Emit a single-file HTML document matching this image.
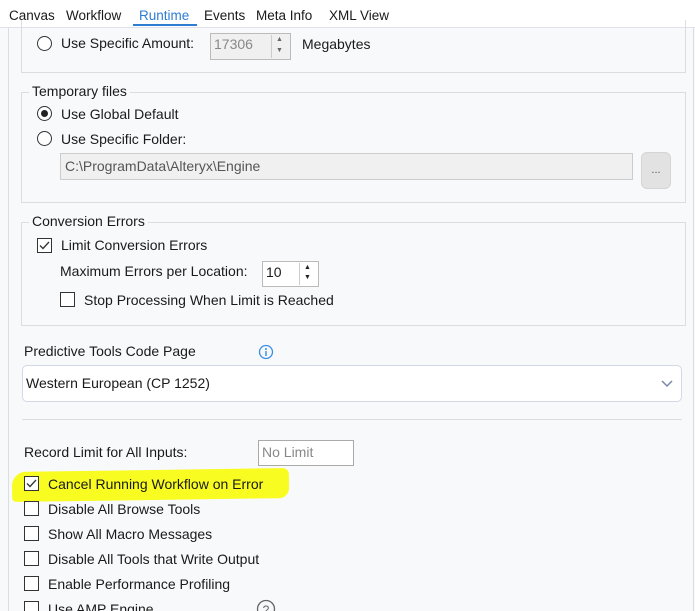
<!DOCTYPE html>
<html><head><meta charset="utf-8"><style>
*{box-sizing:border-box;margin:0;padding:0}
html,body{width:695px;height:611px;overflow:hidden}
body{background:#f8f9fb;font-family:"Liberation Sans",sans-serif;font-size:14px;color:#1a1a1a;position:relative}
.a{position:absolute;white-space:nowrap}
.tabs{position:absolute;left:0;top:0;width:695px;height:28px;background:#fff;border-bottom:1px solid #dfe2e8}
.grp{position:absolute;border:1px solid #dcdde0}
.leg{position:absolute;background:#f8f9fb;padding:0 3px}
.radio{position:absolute;width:15px;height:15px;border:1px solid #333;border-radius:50%;background:#fff}
.radio.on::after{content:"";position:absolute;left:3px;top:3px;width:7px;height:7px;border-radius:50%;background:#222}
.cb{position:absolute;width:15px;height:15px;border:1px solid #333;background:#fff}
.spin{position:absolute;border:1px solid #bbb;background:#fff}
.t{font-size:13.5px}
</style></head><body>
<div class="tabs"></div>
<div class="a t" style="left:9px;top:8px">Canvas</div>
<div class="a t" style="left:66px;top:8px">Workflow</div>
<div class="a t" style="left:139px;top:8px;color:#2d7dd2">Runtime</div>
<div style="position:absolute;left:133px;top:24px;width:64px;height:2px;background:#2d7dd2"></div>
<div class="a t" style="left:204px;top:8px">Events</div>
<div class="a t" style="left:256px;top:8px">Meta Info</div>
<div class="a t" style="left:329px;top:8px">XML View</div>
<div style="position:absolute;left:8px;top:28px;width:1px;height:583px;background:#dcdde0"></div>
<div style="position:absolute;left:693px;top:28px;width:1px;height:583px;background:#dcdde0"></div>

<div class="grp" style="left:21px;top:20px;width:665px;height:53px;border-top:none"></div>
<div class="radio" style="left:37px;top:36px"></div>
<div class="a" style="left:61px;top:35px">Use Specific Amount:</div>
<div class="spin" style="left:210px;top:33px;width:81px;height:27px;background:#f0f0f0"></div>
<div class="a" style="left:214px;top:36px;color:#888">17306</div>
<div style="position:absolute;left:271px;top:35px;width:17px;height:23px;border-left:1px solid #ccc"></div>
<div class="a" style="left:276px;top:36px;font-size:7px;color:#666">▲</div>
<div class="a" style="left:276px;top:47px;font-size:7px;color:#666">▼</div>
<div class="a" style="left:302px;top:36px">Megabytes</div>

<div class="grp" style="left:21px;top:92px;width:665px;height:111px"></div>
<div class="leg" style="left:29px;top:83px">Temporary files</div>
<div class="radio on" style="left:37px;top:106px"></div>
<div class="a" style="left:61px;top:106px">Use Global Default</div>
<div class="radio" style="left:37px;top:131px"></div>
<div class="a" style="left:61px;top:131px">Use Specific Folder:</div>
<div style="position:absolute;left:60px;top:153px;width:573px;height:27px;border:1px solid #ccc;background:#f0f0f0"></div>
<div class="a" style="left:65px;top:158px;color:#555">C:\ProgramData\Alteryx\Engine</div>
<div style="position:absolute;left:641px;top:152px;width:30px;height:37px;border:1px solid #d5d5d5;border-radius:6px;background:#e2e2e2;text-align:center;line-height:34px;font-size:11px;color:#555">...</div>

<div class="grp" style="left:21px;top:222px;width:665px;height:104px"></div>
<div class="leg" style="left:29px;top:213px">Conversion Errors</div>
<div class="cb" style="left:37px;top:238px"></div>
<svg class="a" style="left:38px;top:239px" width="13" height="13"><path d="M2 6.5 L5 9.5 L11 3" stroke="#333" stroke-width="1.3" fill="none"/></svg>
<div class="a" style="left:61px;top:237px">Limit Conversion Errors</div>
<div class="a" style="left:60px;top:263px">Maximum Errors per Location:</div>
<div class="spin" style="left:262px;top:261px;width:57px;height:26px"></div>
<div class="a" style="left:266px;top:264px">10</div>
<div style="position:absolute;left:299px;top:263px;width:18px;height:22px;border-left:1px solid #ccc"></div>
<div class="a" style="left:304px;top:264px;font-size:7px;color:#222">▲</div>
<div class="a" style="left:304px;top:274px;font-size:7px;color:#222">▼</div>
<div class="cb" style="left:60px;top:292px"></div>
<div class="a" style="left:84px;top:292px">Stop Processing When Limit is Reached</div>

<div class="a" style="left:24px;top:343px">Predictive Tools Code Page</div>
<svg class="a" style="left:258px;top:344px" width="16" height="16"><circle cx="8" cy="8" r="6.5" fill="none" stroke="#3a8ee6" stroke-width="1.3"/><circle cx="8" cy="5" r="1" fill="#3a8ee6"/><rect x="7.3" y="7" width="1.4" height="5" fill="#3a8ee6"/></svg>
<div style="position:absolute;left:22px;top:365px;width:660px;height:37px;border:1px solid #d3d8e6;border-radius:5px;background:#fff"></div>
<div class="a" style="left:26px;top:375px">Western European (CP 1252)</div>
<svg class="a" style="left:660px;top:379px" width="14" height="10"><path d="M2 2 L7 7 L12 2" stroke="#7a88a8" stroke-width="1.5" fill="none"/></svg>
<div style="position:absolute;left:22px;top:419px;width:660px;height:1px;background:#dcdde0"></div>

<div class="a" style="left:24px;top:444px">Record Limit for All Inputs:</div>
<div style="position:absolute;left:258px;top:440px;width:96px;height:26px;border:1px solid #aaa;background:#fff"></div>
<div class="a" style="left:262px;top:444px;color:#888">No Limit</div>

<div style="position:absolute;left:12px;top:470px;width:277px;height:30px;background:#f8fc20;border-radius:14px 6px 10px 4px;transform:rotate(-0.8deg)"></div>
<div class="cb" style="left:24px;top:476px"></div>
<svg class="a" style="left:25px;top:477px" width="13" height="13"><path d="M2 6.5 L5 9.5 L11 3" stroke="#333" stroke-width="1.3" fill="none"/></svg>
<div class="a" style="left:48px;top:476px">Cancel Running Workflow on Error</div>
<div class="cb" style="left:24px;top:501px"></div>
<div class="a" style="left:48px;top:501px">Disable All Browse Tools</div>
<div class="cb" style="left:24px;top:526px"></div>
<div class="a" style="left:48px;top:526px">Show All Macro Messages</div>
<div class="cb" style="left:24px;top:551px"></div>
<div class="a" style="left:48px;top:551px">Disable All Tools that Write Output</div>
<div class="cb" style="left:24px;top:576px"></div>
<div class="a" style="left:48px;top:576px">Enable Performance Profiling</div>
<div class="cb" style="left:24px;top:601px"></div>
<div class="a" style="left:48px;top:601px">Use AMP Engine</div>
<svg class="a" style="left:256px;top:599px" width="20" height="20"><circle cx="10" cy="10" r="8.5" fill="none" stroke="#666" stroke-width="1.3"/><text x="10" y="15" font-size="12" text-anchor="middle" fill="#666" font-family="Liberation Sans">?</text></svg>
</body></html>
